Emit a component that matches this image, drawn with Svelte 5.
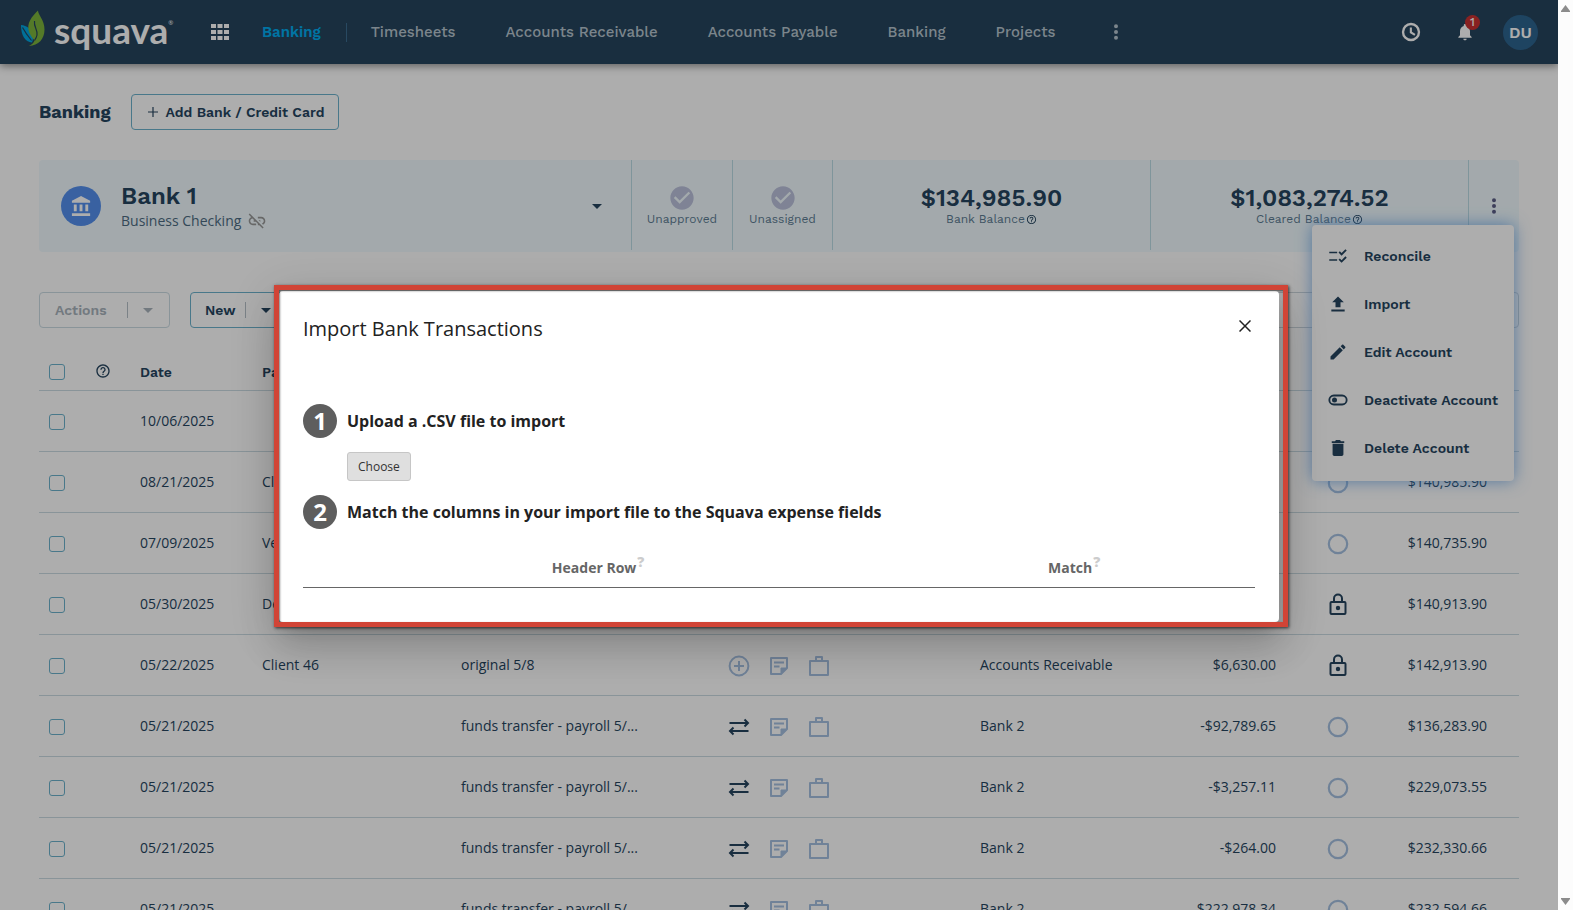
<script lang="ts">
  interface Row {
    date: string;
    payee?: string;
    memo?: string;
    kind: 'add' | 'swap';
    category?: string;
    amount?: string;
    locked?: boolean;
    balance: string;
  }

  const navItems = ['Timesheets', 'Accounts Receivable', 'Accounts Payable', 'Banking', 'Projects'];

  const menuItems = [
    { icon: 'reconcile', label: 'Reconcile' },
    { icon: 'upload', label: 'Import' },
    { icon: 'edit', label: 'Edit Account' },
    { icon: 'toggle', label: 'Deactivate Account' },
    { icon: 'trash', label: 'Delete Account' }
  ];

  const memo = 'funds transfer - payroll 5/...';

  const rows: Row[] = [
    { date: '10/06/2025', kind: 'add', balance: '$140,985.90' },
    { date: '08/21/2025', payee: 'Client', kind: 'add', balance: '$140,985.90' },
    { date: '07/09/2025', payee: 'Vendor', kind: 'add', balance: '$140,735.90' },
    { date: '05/30/2025', payee: 'Deposit', kind: 'add', locked: true, balance: '$140,913.90' },
    { date: '05/22/2025', payee: 'Client 46', memo: 'original 5/8', kind: 'add', category: 'Accounts Receivable', amount: '$6,630.00', locked: true, balance: '$142,913.90' },
    { date: '05/21/2025', memo, kind: 'swap', category: 'Bank 2', amount: '-$92,789.65', balance: '$136,283.90' },
    { date: '05/21/2025', memo, kind: 'swap', category: 'Bank 2', amount: '-$3,257.11', balance: '$229,073.55' },
    { date: '05/21/2025', memo, kind: 'swap', category: 'Bank 2', amount: '-$264.00', balance: '$232,330.66' },
    { date: '05/21/2025', memo, kind: 'swap', category: 'Bank 2', amount: '$222,978.34', balance: '$232,594.66' }
  ];

  // filled 24x24 icons
  const paths: Record<string, string> = {
    bell: 'M12 22c1.1 0 2-.9 2-2h-4c0 1.1.89 2 2 2zm6-6v-5c0-3.07-1.64-5.64-4.5-6.32V4c0-.83-.67-1.5-1.5-1.5s-1.5.67-1.5 1.5v.68C7.63 5.36 6 7.92 6 11v5l-2 2v1h16v-1l-2-2z',
    clock: 'M12 2a10 10 0 1 0 0 20 10 10 0 0 0 0-20zm0 17.400a7.400 7.400 0 1 1 0-14.800 7.400 7.400 0 0 1 0 14.800zM13 7h-2.300v6l5 3 1.200-1.900-3.900-2.300z',
    bank: 'M4 10v7h3v-7H4zm6 0v7h3v-7h-3zM2 22h19v-3H2v3zm14-12v7h3v-7h-3zm-4.5-9L2 6v2h19V6l-9.5-5z',
    unlink: 'M17 7h-4v1.9h4c1.71 0 3.1 1.39 3.1 3.1 0 1.43-.98 2.63-2.31 2.98l1.46 1.46C20.88 15.61 22 13.95 22 12c0-2.76-2.24-5-5-5zm-1 4h-2.19l2 2H16zM2 4.27l3.11 3.11C3.29 8.12 2 9.91 2 12c0 2.76 2.24 5 5 5h4v-1.9H7c-1.71 0-3.1-1.39-3.1-3.1 0-1.59 1.21-2.9 2.76-3.07L8.73 11H8v2h2.73L13 15.27V17h1.73l4.01 4L20 19.74 3.27 3 2 4.27z',
    caret: 'M7 10l5 5 5-5z',
    check: 'M12 2C6.48 2 2 6.48 2 12s4.48 10 10 10 10-4.48 10-10S17.52 2 12 2zm-2 15l-5-5 1.41-1.41L10 14.17l7.59-7.59L19 8l-9 9z',
    help: 'M11 18h2v-2h-2v2zm1-16C6.48 2 2 6.48 2 12s4.48 10 10 10 10-4.48 10-10S17.52 2 12 2zm0 18c-4.41 0-8-3.59-8-8s3.59-8 8-8 8 3.59 8 8-3.59 8-8 8zm0-14c-2.21 0-4 1.79-4 4h2c0-1.1.9-2 2-2s2 .9 2 2c0 2-3 1.75-3 5h2c0-2.25 3-2.5 3-5 0-2.21-1.79-4-4-4z',
    dots: 'M12 2.6a2.4 2.4 0 1 0 0 4.8 2.4 2.4 0 0 0 0-4.8zm0 7a2.4 2.4 0 1 0 0 4.8 2.4 2.4 0 0 0 0-4.8zm0 7a2.4 2.4 0 1 0 0 4.8 2.4 2.4 0 0 0 0-4.8z',
    reconcile: 'M1.500 7H11v1.800H1.500zM1.500 15.800H11v1.800H1.500zM16.300 11.600l-3.700-3.700 1.600-1.600 2.100 2.100 4.600-4.600 1.600 1.600zM16.300 20.200l-3.700-3.700 1.600-1.600 2.100 2.100 4.600-4.600 1.600 1.600z',
    upload: 'M9 16h6v-6h4l-7-7-7 7h4zM4 18.600h16v2.400H4z',
    edit: 'M3 17.25V21h3.75L17.81 9.94l-3.75-3.75L3 17.25zM20.71 7.04c.39-.39.39-1.02 0-1.41l-2.34-2.34c-.39-.39-1.02-.39-1.41 0l-1.83 1.83 3.75 3.75 1.83-1.83z',
    toggle: 'M17 5.500H7a6.500 6.500 0 0 0 0 13h10a6.500 6.500 0 0 0 0-13zm0 10.800H7a4.300 4.300 0 0 1 0-8.600h10a4.300 4.300 0 0 1 0 8.600zM7.800 9a3 3 0 1 0 0 6 3 3 0 0 0 0-6z',
    trash: 'M5.500 19.500c0 1.100.9 2 2 2h9c1.100 0 2-.9 2-2V7h-13v12.500zM19.500 3.800h-4l-1-1.300h-5l-1 1.300h-4V6h15V3.800z'
  };

  let open = $state(true);
</script>

{#snippet icon(name: string, size: number)}
  <svg width={size} height={size} viewBox="0 0 24 24" fill="currentColor" aria-hidden="true">
    <path d={paths[name]} />
  </svg>
{/snippet}

<div class="shell">
  <div class="page">
    <header class="topbar">
      <a class="logo" href="#home" aria-label="squava">
        <svg width="26" height="38" viewBox="0 0 26 38" aria-hidden="true">
          <path d="M1 15c6 .5 10 4 11.500 9 .8 3 .6 6-.5 8.500C5 31.500 1 26 1 15z" fill="#00a5e0" />
          <path d="M18 .5c-.2 4 6.500 9.500 6.500 19 0 9.500-6 16-15.500 16.500 3-1.500 5-3.500 5.500-5.500-6-7-8-13-4.500-20 2-4 5.500-7.500 8-10z" fill="#7db43c" />
          <path d="M14.500 11c-1 6 3.500 9 2.500 14-.4 2.500-1.500 4-2.500 5.500M2.500 17.500c2.500 4.500 5 8 9 13" fill="none" stroke="#26445d" stroke-width="1.200" />
        </svg>
        <span class="wordmark">squava</span><span class="reg">®</span>
      </a>
      <nav class="nav">
        <button class="plain apps" aria-label="Apps">
          <svg width="18" height="16" viewBox="0 0 18 16" fill="currentColor">
            {#each [0, 6, 12] as y}
              {#each [0, 6.5, 13] as x}
                <rect {x} {y} width="5" height="4" />
              {/each}
            {/each}
          </svg>
        </button>
        <a class="active" href="#banking">Banking</a>
        <span class="sep"></span>
        <div class="links">
          {#each navItems as item}
            <a href="#{item}">{item}</a>
          {/each}
          <button class="plain" aria-label="More">{@render icon('dots', 20)}</button>
        </div>
      </nav>
      <div class="tools">
        <button class="plain" aria-label="Timer">{@render icon('clock', 22)}</button>
        <button class="plain bell" aria-label="Notifications">
          {@render icon('bell', 20)}
          <span class="badge">1</span>
        </button>
        <button class="plain avatar">DU</button>
      </div>
    </header>

    <main>
      <div class="title-row">
        <h1>Banking</h1>
        <button class="btn add">
          <svg width="10" height="10" viewBox="0 0 10 10" stroke="currentColor" stroke-width="1.200"><path d="M5 0v10M0 5h10" /></svg>
          Add Bank / Credit Card
        </button>
      </div>

      <section class="account">
        <div class="cell bank">
          <span class="bank-icon">{@render icon('bank', 23)}</span>
          <div class="bank-text">
            <h2>Bank 1</h2>
            <p>Business Checking <span class="unlink">{@render icon('unlink', 20)}</span></p>
          </div>
          <button class="plain" aria-label="Choose account">{@render icon('caret', 24)}</button>
        </div>
        <div class="cell stat">
          <span class="tick">{@render icon('check', 28)}</span>
          <span class="label">Unapproved</span>
        </div>
        <div class="cell stat">
          <span class="tick">{@render icon('check', 28)}</span>
          <span class="label">Unassigned</span>
        </div>
        <div class="cell stat">
          <strong>$134,985.90</strong>
          <span class="label">Bank Balance{@render icon('help', 11)}</span>
        </div>
        <div class="cell stat">
          <strong>$1,083,274.52</strong>
          <span class="label">Cleared Balance{@render icon('help', 11)}</span>
        </div>
        <button class="plain more" aria-label="Account menu">{@render icon('dots', 20)}</button>

        <div class="menu" role="menu">
          {#each menuItems as item}
            <button class="plain" role="menuitem">
              {@render icon(item.icon, 20)}
              {item.label}
            </button>
          {/each}
        </div>
      </section>

      <div class="toolbar">
        <button class="btn split" disabled>Actions <span class="split-caret">{@render icon('caret', 24)}</span></button>
        <button class="btn split new">New <span class="split-caret">{@render icon('caret', 24)}</span></button>
        <input class="search" type="text" aria-label="Search" />
      </div>

      <table class="ledger">
        <colgroup>
          <col class="c-check" /><col class="c-help" /><col class="c-date" /><col class="c-payee" /><col class="c-memo" />
          <col class="c-icons" /><col /><col class="c-amount" /><col class="c-status" /><col class="c-balance" />
        </colgroup>
        <thead>
          <tr>
            <th class="check"><input type="checkbox" aria-label="Select all" /></th>
            <th>{@render icon('help', 16)}</th>
            <th>Date</th>
            <th>Payee</th>
            <th></th>
            <th></th>
            <th></th>
            <th></th>
            <th></th>
            <th></th>
          </tr>
        </thead>
        <tbody>
          {#each rows as row, i}
            <tr>
              <td class="check"><input type="checkbox" aria-label="Select row {i + 1}" /></td>
              <td></td>
              <td>{row.date}</td>
              <td>{row.payee ?? ''}</td>
              <td>{row.memo ?? ''}</td>
              <td>
                <div class="icons">
                  {#if row.kind === 'add'}
                    <svg width="22" height="22" viewBox="0 0 22 22" fill="none" stroke="currentColor" stroke-width="2">
                      <circle cx="11" cy="11" r="9.400" /><path d="M11 6v10M6 11h10" />
                    </svg>
                  {:else}
                    <svg class="dark" width="22" height="22" viewBox="0 0 22 22" fill="none" stroke="currentColor" stroke-width="2">
                      <path d="M1.500 7H20M16.500 3.500L20 7l-3.500 3.500M20.500 15H2M5.500 11.500L2 15l3.500 3.500" />
                    </svg>
                  {/if}
                  <svg width="22" height="22" viewBox="0 0 22 22" fill="none" stroke="currentColor" stroke-width="2">
                    <path d="M3 3h16v10l-6 6H3z" stroke-linejoin="round" />
                    <path d="M13 19v-6h6z" fill="currentColor" stroke-width="1" />
                    <path d="M6 7.500h10M6 11.500h5.500" />
                  </svg>
                  <svg width="22" height="22" viewBox="0 0 22 22" fill="none" stroke="currentColor" stroke-width="2" stroke-linejoin="round">
                    <path d="M2 6h18v14H2zM8 6V2h6v4" />
                  </svg>
                </div>
              </td>
              <td>{row.category ?? ''}</td>
              <td class="num">{row.amount ?? ''}</td>
              <td class="status">
                {#if row.locked}
                  <svg class="dark" width="22" height="24" viewBox="0 0 22 24" fill="none" stroke="currentColor" stroke-width="2">
                    <rect x="3.500" y="9" width="15" height="12" rx="1" />
                    <path d="M7 9V5.500a4 4 0 0 1 8 0V9" />
                    <circle cx="11" cy="15" r="1.200" fill="currentColor" />
                  </svg>
                {:else}
                  <svg width="22" height="22" viewBox="0 0 22 22" fill="none" stroke="currentColor" stroke-width="2.200">
                    <circle cx="11" cy="11" r="9.200" />
                  </svg>
                {/if}
              </td>
              <td class="num last">{row.balance}</td>
            </tr>
          {/each}
        </tbody>
      </table>
    </main>

    {#if open}
      <div class="backdrop">
        <div class="dialog" role="dialog" aria-modal="true" aria-labelledby="dialog-title">
          <div class="dialog-head">
            <h2 id="dialog-title">Import Bank Transactions</h2>
            <button class="plain" aria-label="Close" onclick={() => (open = false)}>
              <svg width="12" height="12" viewBox="0 0 12 12" stroke="currentColor" stroke-width="1.500"><path d="M.5.5l11 11M11.500.5l-11 11" /></svg>
            </button>
          </div>
          <div class="step"><span class="step-no">1</span>Upload a .CSV file to import</div>
          <button class="choose">Choose</button>
          <div class="step"><span class="step-no">2</span>Match the columns in your import file to the Squava expense fields</div>
          <table class="match">
            <thead>
              <tr>
                <th class="col-header">Header Row<sup>?</sup></th>
                <th>Match<sup>?</sup></th>
              </tr>
            </thead>
          </table>
        </div>
      </div>
    {/if}
  </div>

  <div class="scrollbar">
    <svg width="9" height="7" viewBox="0 0 9 7"><path d="M4.500 0L9 6v1H0V6z" fill="#8b8b8b" /></svg>
    <svg width="9" height="7" viewBox="0 0 9 7"><path d="M4.500 7L9 1V0H0v1z" fill="#8b8b8b" /></svg>
  </div>
</div>

<style>
  :global(body) {
    margin: 0;
    overflow: hidden;
  }

  .shell {
    --ink: #26455f;
    --muted: #a5c0e0;
    --line: #cadae2;
    --teal: #6cb2cc;
    --head: "Work Sans", Inter, sans-serif;
    display: grid;
    grid-template-columns: minmax(0, 1fr) 15px;
    height: 100vh;
    font-family: "Open Sans", sans-serif;
    font-size: 14px;
    color: var(--ink);
    background: #fff;
  }

  .page {
    position: relative;
    overflow: hidden;
  }

  svg {
    display: block;
    flex-shrink: 0;
  }

  a {
    color: inherit;
    text-decoration: none;
  }

  h1, h2, p {
    margin: 0;
  }

  .plain {
    display: flex;
    align-items: center;
    padding: 0;
    border: 0;
    background: none;
    color: inherit;
    font: inherit;
    cursor: pointer;
  }

  /* --- TOP BAR --- */
  .topbar {
    display: flex;
    align-items: center;
    height: 64px;
    padding: 0 20px;
    background: #26445d;
    color: #fff;
    box-shadow: 0 2px 8px rgba(0, 0, 0, 0.45);
  }

  .logo {
    display: flex;
    align-items: center;
    width: 191px;
  }

  .logo svg {
    margin-bottom: 6px;
  }

  .wordmark {
    margin-left: 8px;
    font-family: Lato, sans-serif;
    font-size: 37px;
    font-weight: 700;
    line-height: 64px;
    padding-bottom: 4px;
  }

  .reg {
    margin-bottom: 18px;
    font-size: 6px;
  }

  .nav,
  .links {
    display: flex;
    align-items: center;
  }

  .nav {
    flex: 1;
    font-family: var(--head);
    font-size: 15px;
    font-weight: 500;
  }

  .active {
    margin-left: 33px;
    color: #00acf0;
    font-weight: 600;
  }

  .sep {
    width: 1px;
    height: 19px;
    margin: 0 24px 0 25px;
    background: #3c6c90;
  }

  .links {
    gap: 50px;
    color: #b6c4ce;
  }

  .tools {
    display: flex;
    align-items: center;
    gap: 33px;
  }

  .bell {
    position: relative;
  }

  .badge {
    position: absolute;
    top: -7px;
    left: 10px;
    width: 15px;
    height: 15px;
    border-radius: 50%;
    background: #c93232;
    font: 500 12px/14px var(--head);
    text-align: center;
  }

  .avatar {
    justify-content: center;
    width: 35px;
    height: 35px;
    margin-left: -5px;
    border-radius: 50%;
    background: #2d6590;
    font: 600 16px var(--head);
  }

  /* --- PAGE TITLE --- */
  main {
    padding: 30px 39px 0;
  }

  .title-row {
    display: flex;
    align-items: center;
    gap: 20px;
  }

  h1 {
    padding-bottom: 2px;
    font: 700 18px var(--head);
  }

  .btn {
    box-sizing: border-box;
    display: flex;
    align-items: center;
    height: 36px;
    padding: 0 15px;
    border: 1px solid var(--teal);
    border-radius: 4px;
    background: none;
    color: var(--ink);
    font: 600 14px var(--head);
  }

  .add {
    gap: 8px;
    padding: 0 13px 0 16px;
  }

  /* --- ACCOUNT PANEL --- */
  .account {
    position: relative;
    display: grid;
    grid-template-columns: minmax(0, 593fr) 101px 100px minmax(0, 318fr) minmax(0, 318fr) 50px;
    height: 90px;
    margin-top: 30px;
    padding-bottom: 2px;
    border-radius: 4px;
    background: #f0fafe;
  }

  .cell {
    border-right: 1px solid #bcdce5;
  }

  .bank {
    display: flex;
    align-items: center;
    padding: 2px 22px 0;
  }

  .bank-icon {
    display: grid;
    place-items: center;
    width: 40px;
    height: 40px;
    border-radius: 50%;
    background: #5490ee;
    color: #fff;
  }

  .bank-text {
    flex: 1;
    margin-left: 20px;
  }

  .bank-text h2 {
    font: 600 24px/28px var(--head);
  }

  .bank-text p {
    display: flex;
    align-items: center;
    gap: 6px;
    margin-top: 1px;
    font-weight: 500;
    line-height: 20px;
    color: #4d6b82;
  }

  .unlink {
    color: #999;
  }

  .stat {
    display: flex;
    flex-direction: column;
    align-items: center;
    padding-top: 24px;
  }

  .tick {
    height: 28px;
    color: #bcc2dc;
  }

  .stat strong {
    font: 600 24px/28px var(--head);
  }

  .label {
    display: flex;
    align-items: center;
    gap: 1px;
    font: 400 12px/14px var(--head);
    color: #5d7c93;
  }

  .label svg {
    color: var(--ink);
  }

  .more {
    justify-content: center;
    padding-top: 2px;
    color: #5b5d85;
  }

  .menu {
    position: absolute;
    z-index: 1;
    top: 65px;
    right: 5px;
    width: 202px;
    padding: 7px 0 9px;
    border-radius: 4px;
    background: #fff;
    box-shadow: 0 0 16px rgba(80, 150, 225, 0.75);
  }

  .menu button {
    gap: 16px;
    width: 100%;
    height: 48px;
    padding-left: 16px;
    font: 600 14px var(--head);
    white-space: nowrap;
  }

  /* --- TOOLBAR --- */
  .toolbar {
    display: flex;
    gap: 20px;
    margin-top: 40px;
  }

  .split {
    justify-content: space-between;
    width: 131px;
    padding-right: 9px;
  }

  .split:disabled {
    border-color: var(--line);
    color: #a9b3bc;
  }

  .new {
    width: 98px;
    padding-left: 14px;
  }

  .split-caret {
    padding-left: 8px;
    border-left: 1px solid #b5c0c8;
    height: 16px;
    display: flex;
    align-items: center;
  }

  .search {
    box-sizing: border-box;
    width: 300px;
    height: 36px;
    margin-left: auto;
    border: 1px solid #cdd5db;
    border-radius: 4px;
    background: none;
  }

  /* --- LEDGER --- */
  .ledger {
    width: 100%;
    margin-top: 25px;
    border-collapse: collapse;
    table-layout: fixed;
  }

  .c-check { width: 49px; }
  .c-help { width: 52px; }
  .c-date { width: 122px; }
  .c-payee { width: 199px; }
  .c-memo { width: 267px; }
  .c-icons { width: 252px; }
  .c-amount { width: 126px; }
  .c-status { width: 124px; }
  .c-balance { width: 119px; }

  .ledger th,
  .ledger td {
    height: 58px;
    padding: 0 0 2px;
    border-bottom: 1px solid var(--line);
    text-align: left;
    white-space: nowrap;
  }

  .ledger th {
    height: 37px;
    padding: 0;
    font: 600 14px var(--head);
  }

  .ledger th svg {
    margin: 0 0 2px 7px;
  }

  .ledger .check {
    padding-left: 10px;
  }

  .ledger input {
    display: block;
    appearance: none;
    box-sizing: border-box;
    width: 16px;
    height: 16px;
    margin: 0;
    border: 1px solid var(--teal);
    border-radius: 3px;
  }

  .ledger td input,
  .ledger td svg {
    margin-top: 4px;
  }

  .icons {
    display: flex;
    gap: 18px;
    color: var(--muted);
  }

  .ledger .num {
    text-align: right;
  }

  .ledger .last {
    padding-right: 32px;
  }

  .status {
    color: var(--muted);
  }

  .status svg {
    margin: 0 auto;
  }

  .icons .dark,
  .status .dark {
    color: var(--ink);
  }

  /* --- DIALOG --- */
  .backdrop {
    position: absolute;
    z-index: 2;
    inset: 0;
    display: flex;
    align-items: center;
    justify-content: center;
    padding-top: 3px;
    background: rgba(0, 0, 0, 0.32);
  }

  .dialog {
    position: relative;
    box-sizing: border-box;
    width: min(1000px, 90%);
    padding: 24px 24px 34px;
    border-radius: 4px;
    background: #fff;
    color: #222;
    box-shadow:
      0 11px 15px -7px rgba(0, 0, 0, 0.2),
      0 24px 38px 3px rgba(0, 0, 0, 0.14),
      0 9px 46px 8px rgba(0, 0, 0, 0.12);
  }

  .dialog::after {
    content: "";
    position: absolute;
    inset: -6px -9px -5px -5px;
    border: 5px solid #d14436;
    box-shadow: 1px 1px 3px rgba(0, 0, 0, 0.7), inset 1px 1px 2px rgba(0, 0, 0, 0.5);
    pointer-events: none;
  }

  .dialog-head {
    display: flex;
    align-items: center;
    justify-content: space-between;
    margin-bottom: 61px;
    padding-right: 4px;
  }

  .dialog-head h2 {
    font-size: 20px;
    font-weight: 400;
    line-height: 28px;
  }

  .dialog-head button {
    margin-bottom: 6px;
  }

  .step {
    display: flex;
    align-items: center;
    gap: 10px;
    font-size: 16px;
    font-weight: 700;
  }

  .step-no {
    width: 34px;
    height: 34px;
    border-radius: 50%;
    background: #5e5e5e;
    color: #fff;
    font-size: 24px;
    line-height: 34px;
    text-align: center;
  }

  .choose {
    display: block;
    height: 29px;
    margin: 14px 0 14px 44px;
    padding: 0 10px;
    border: 1px solid #c6c6c6;
    border-radius: 3px;
    background: #dfdfdf;
    color: #333;
    font: 12px "Open Sans", sans-serif;
  }

  .match {
    width: 100%;
    border-collapse: collapse;
    color: #666;
  }

  .match th {
    height: 40px;
    padding: 18px 0 0;
    border-bottom: 1px solid #666;
    text-align: center;
  }

  .match .col-header {
    width: 62%;
  }

  .match sup {
    margin-left: 1px;
    color: #ccc;
    font-size: 14px;
    font-weight: 800;
    line-height: 0;
  }

  /* --- SCROLLBAR --- */
  .scrollbar {
    display: flex;
    flex-direction: column;
    align-items: center;
    justify-content: space-between;
    padding: 5px 0;
    background: #fcfcfc;
  }
</style>
